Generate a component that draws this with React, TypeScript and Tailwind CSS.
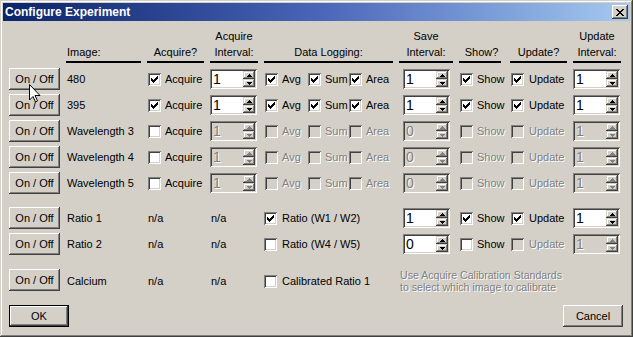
import React from 'react';

const COLS =
  'grid grid-cols-[51px_75px_57px_48px_129px_54px_45px_57px_48px] gap-x-[6px] h-[22px]';
const DIS = 'text-[#808080] [text-shadow:1px_1px_0_#fff]';

function Check({ checked, disabled }: { checked?: boolean; disabled?: boolean }) {
  return (
    <span
      className={`inline-block w-[13px] h-[13px] shrink-0 shadow-[inset_1px_1px_#808080,inset_-1px_-1px_#fff,inset_2px_2px_#404040,inset_-2px_-2px_#d4d0c8] ${
        disabled ? 'bg-[#d4d0c8]' : 'bg-white'
      }`}
    >
      {checked && (
        <svg width="13" height="13" viewBox="0 0 13 13" shapeRendering="crispEdges" className="block">
          <path
            d="M3 5h1v1h1v1h1V6h1V5h1V4h1V3h1v3H9v1H8v1H7v1H6v1H5V9H4V8H3z"
            fill={disabled ? '#808080' : '#000'}
          />
        </svg>
      )}
    </span>
  );
}

function SpinBtn({ up, disabled }: { up?: boolean; disabled?: boolean }) {
  return (
    <div className="flex-1 flex items-center justify-center bg-[#d4d0c8] shadow-[inset_-1px_-1px_#404040,inset_1px_1px_#d4d0c8,inset_-2px_-2px_#808080,inset_2px_2px_#fff]">
      <svg width="5" height="3" viewBox="0 0 5 3" shapeRendering="crispEdges" className="block">
        <path
          d={up ? 'M2 0h1v1h1v1h1v1H0V2h1V1h1z' : 'M0 0h5v1H4v1H3v1H2V2H1V1H0z'}
          fill={disabled ? '#808080' : '#000'}
        />
      </svg>
    </div>
  );
}

function Spin({ value, disabled }: { value: string; disabled?: boolean }) {
  return (
    <div
      className={`flex w-[47px] h-[20px] p-[2px] shadow-[inset_1px_1px_#808080,inset_-1px_-1px_#fff,inset_2px_2px_#404040,inset_-2px_-2px_#d4d0c8] ${
        disabled ? 'bg-[#d4d0c8]' : 'bg-white'
      }`}
    >
      <span className={`flex-1 pl-[1px] text-[14px] leading-[16px] ${disabled ? DIS : ''}`}>{value}</span>
      <div className="flex flex-col w-[12px]">
        <SpinBtn up disabled={disabled} />
        <SpinBtn disabled={disabled} />
      </div>
    </div>
  );
}

function Btn({ children, className = '', def }: { children: React.ReactNode; className?: string; def?: boolean }) {
  return (
    <div
      className={`flex items-center justify-center bg-[#d4d0c8] ${
        def
          ? 'shadow-[inset_0_0_0_1px_#000,inset_-2px_-2px_#404040,inset_2px_2px_#fff,inset_-3px_-3px_#808080]'
          : 'shadow-[inset_-1px_-1px_#404040,inset_1px_1px_#fff,inset_-2px_-2px_#808080,inset_2px_2px_#d4d0c8]'
      } ${className}`}
    >
      {children}
    </div>
  );
}

function Labeled({
  text,
  checked,
  disabled,
  gap = 'gap-[4px]',
  className = '',
}: {
  text: string;
  checked?: boolean;
  disabled?: boolean;
  gap?: string;
  className?: string;
}) {
  return (
    <div className={`flex items-center ${gap} ${className}`}>
      <Check checked={checked} disabled={disabled} />
      <span className={disabled ? DIS : ''}>{text}</span>
    </div>
  );
}

function Head({ lines, left, uw }: { lines: string[]; left?: boolean; uw?: string }) {
  return (
    <div className="flex flex-col justify-end h-[35px]">
      {lines.map((l) => (
        <div key={l} className={`leading-[16px] ${left ? 'pl-[1px]' : 'text-center'}`}>
          {l}
        </div>
      ))}
      <div className={`mt-[1px] h-[2px] bg-black ${uw ?? 'w-full'}`} />
    </div>
  );
}

const waves = [
  { name: '480', on: true },
  { name: '395', on: true },
  { name: 'Wavelength 3', on: false },
  { name: 'Wavelength 4', on: false },
  { name: 'Wavelength 5', on: false },
];

export default function App() {
  return (
    <div className="relative w-[633px] h-[337px] p-[3px] bg-[#d4d0c8] shadow-[inset_-1px_-1px_#404040,inset_1px_1px_#d4d0c8,inset_-2px_-2px_#808080,inset_2px_2px_#fff] font-['Liberation_Sans',Arial,sans-serif] text-[11px] text-black overflow-hidden">
      {/* title bar */}
      <div className="flex items-center h-[18px] pl-[2px] pr-[2px] bg-gradient-to-r from-[#0a246a] via-[#4a64b8] to-[#a6caf0]">
        <span className="flex-1 text-white font-bold text-[12px] leading-[18px]">Configure Experiment</span>
        <Btn className="w-[16px] h-[14px]">
          <svg width="8" height="7" viewBox="0 0 8 7" shapeRendering="crispEdges" className="block">
            <path d="M0 0h2v1h1v1h2V1h1V0h2v1H7v1H6v1H5v1h1v1h1v1h1v1H6V6H5V5H3v1H2v1H0V6h1V5h1V4h1V3H2V2H1V1H0z" />
          </svg>
        </Btn>
      </div>

      <div className="pt-[7px] pl-[6px]">
        {/* header */}
        <div className="grid grid-cols-[51px_75px_57px_48px_129px_54px_45px_57px_48px] gap-x-[6px]">
          <div />
          <Head lines={['Image:']} left />
          <Head lines={['Acquire?']} />
          <Head lines={['Acquire', 'Interval:']} />
          <Head lines={['Data Logging:']} />
          <Head lines={['Save', 'Interval:']} />
          <Head lines={['Show?']} uw="w-[42px]" />
          <Head lines={['Update?']} />
          <Head lines={['Update', 'Interval:']} />
        </div>

        {/* wavelengths */}
        <div className="flex flex-col gap-[4px] mt-[5px]">
          {waves.map((w) => (
            <div key={w.name} className={COLS}>
              <Btn className="h-[22px]">On / Off</Btn>
              <div className="flex items-center pl-[1px]">{w.name}</div>
              <Labeled text="Acquire" checked={w.on} className="pl-[1px]" />
              <div className="flex items-center">
                <Spin value="1" disabled={!w.on} />
              </div>
              <div className="flex items-center pl-[1px]">
                <Labeled text="Avg" checked={w.on} disabled={!w.on} className="w-[43px]" />
                <Labeled text="Sum" checked={w.on} disabled={!w.on} className="w-[41px]" />
                <Labeled text="Area" checked={w.on} disabled={!w.on} />
              </div>
              <div className="flex items-center pl-[4px]">
                <Spin value={w.on ? '1' : '0'} disabled={!w.on} />
              </div>
              <Labeled text="Show" checked={w.on} disabled={!w.on} className="pl-[1px]" />
              <Labeled text="Update" checked={w.on} disabled={!w.on} gap="gap-[5px]" className="pl-[1px]" />
              <div className="flex items-center">
                <Spin value="1" disabled={!w.on} />
              </div>
            </div>
          ))}
        </div>

        {/* ratios */}
        <div className="flex flex-col gap-[4px] mt-[13px]">
          <div className={COLS}>
            <Btn className="h-[22px]">On / Off</Btn>
            <div className="flex items-center pl-[1px]">Ratio 1</div>
            <div className="flex items-center pl-[1px]">n/a</div>
            <div className="flex items-center pl-[1px]">n/a</div>
            <Labeled text="Ratio (W1 / W2)" checked gap="gap-[5px]" />
            <div className="flex items-center pl-[4px]">
              <Spin value="1" />
            </div>
            <Labeled text="Show" checked className="pl-[1px]" />
            <Labeled text="Update" checked gap="gap-[5px]" className="pl-[1px]" />
            <div className="flex items-center">
              <Spin value="1" />
            </div>
          </div>
          <div className={COLS}>
            <Btn className="h-[22px]">On / Off</Btn>
            <div className="flex items-center pl-[1px]">Ratio 2</div>
            <div className="flex items-center pl-[1px]">n/a</div>
            <div className="flex items-center pl-[1px]">n/a</div>
            <Labeled text="Ratio (W4 / W5)" gap="gap-[5px]" />
            <div className="flex items-center pl-[4px]">
              <Spin value="0" />
            </div>
            <Labeled text="Show" className="pl-[1px]" />
            <Labeled text="Update" disabled gap="gap-[5px]" className="pl-[1px]" />
            <div className="flex items-center">
              <Spin value="1" disabled />
            </div>
          </div>
        </div>

        {/* calcium */}
        <div className={`${COLS} mt-[14px]`}>
          <Btn className="h-[22px]">On / Off</Btn>
          <div className="flex items-center pl-[1px]">Calcium</div>
          <div className="flex items-center pl-[1px]">n/a</div>
          <div className="flex items-center pl-[1px]">n/a</div>
          <Labeled text="Calibrated Ratio 1" gap="gap-[5px]" />
          <div className={`col-span-4 flex flex-col justify-center pl-[1px] text-[10.6px] leading-[12px] ${DIS}`}>
            <div>Use Acquire Calibration Standards</div>
            <div>to select which image to calibrate</div>
          </div>
        </div>

        {/* footer */}
        <div className="flex justify-between w-[614px] mt-[14px]">
          <Btn def className="w-[60px] h-[22px]">OK</Btn>
          <Btn className="w-[60px] h-[22px]">Cancel</Btn>
        </div>
      </div>

      {/* mouse pointer */}
      <svg
        width="12"
        height="19"
        viewBox="0 0 12 19"
        className="absolute left-[29px] top-[84px] pointer-events-none"
      >
        <path d="M0.5 0.5V16L4 12.5L6.5 18L8.5 17L6 11.5H11Z" fill="#fff" stroke="#000" strokeWidth="1" />
      </svg>
    </div>
  );
}
